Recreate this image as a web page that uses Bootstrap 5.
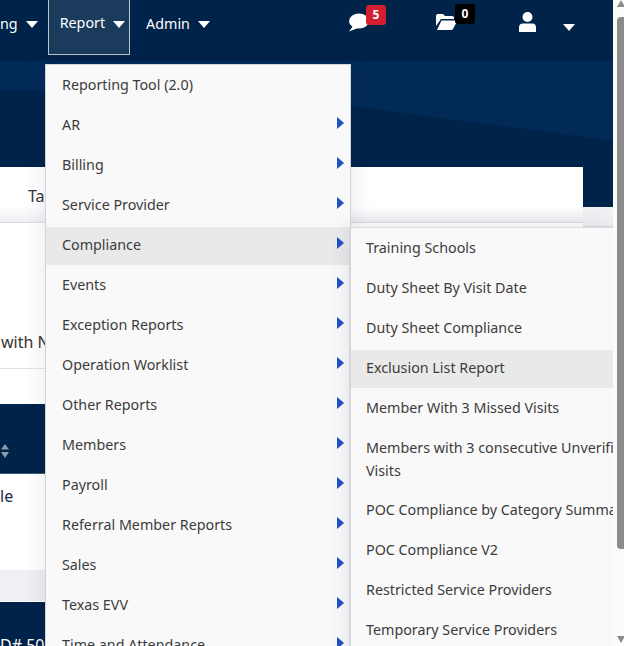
<!DOCTYPE html>
<html lang="en">
<head>
  <meta charset="UTF-8">
  <meta name="viewport" content="width=device-width, initial-scale=1">
  <title>Report menu</title>
  <link href="https://cdn.jsdelivr.net/npm/bootstrap@5.3.0/dist/css/bootstrap.min.css" rel="stylesheet">
  <style>
    html, body { height: 646px; overflow: hidden; }
    body { position: relative; font-family: "Noto Sans", "Open Sans", sans-serif; font-size: 14.3px; background: #fff; color: #333; }

    /* scrollbar of the window */
    .win-bar { position: absolute; top: 0; right: 0; bottom: 0; width: 11px; background: #fbfbfb; z-index: 5; }
    .win-thumb { position: absolute; left: 4px; right: 0; top: 17px; height: 532px; background: #8b8b8b; border-radius: 4px 0 0 4px; }
    .win-up, .win-down { position: absolute; left: 4px; width: 0; height: 0; border-left: 4px solid transparent; border-right: 4px solid transparent; }
    .win-up { top: 0; border-bottom: 7px solid #8b8b8b; }
    .win-down { bottom: 3px; border-top: 7px solid #8b8b8b; }

    .top-bar { height: 61px; background: #00234a; }
    .top-item { color: #fff; height: 55px; display: flex; align-items: center; gap: 8px; padding: 0 10px 8px 11px; }
    .top-first { margin-left: -11px; }
    .top-item-on { background: #1b3b5c; border: 1px solid #b9c4cf; border-top: 0; padding-right: 4px; }
    .top-after { margin-left: 5px; }
    .caret-down { width: 0; height: 0; border-left: 6.5px solid transparent; border-right: 6.5px solid transparent; border-top: 7px solid #fff; margin-top: 2px; }
    .caret-user { position: absolute; left: 563px; top: 22px; }
    .top-icon { position: absolute; }
    .icon-chat { left: 348px; top: 13px; }
    .icon-folder { left: 436px; top: 14px; }
    .icon-user { left: 519px; top: 12px; }
    .count-tag { position: absolute; width: 20px; height: 20px; border-radius: 3px; color: #fff; font-size: 12px; font-weight: 700; display: flex; align-items: center; justify-content: center; }
    .tag-chat { left: 366px; top: 5px; background: #d2202f; }
    .tag-folder { left: 455px; top: 4px; background: #000; }

    .hero { height: 146px; background: #00234a; position: relative; overflow: hidden; }
    .hero svg { display: block; }

    .back-text { font-size: 16px; }
    .tab-card { position: absolute; top: 167px; left: 0; width: 583px; height: 56px; background: linear-gradient(#fff 70%, #f0eff3); border-bottom: 1px solid #dcdce0; padding: 17px 0 0 28px; color: #333; }
    .strip-grey { position: absolute; top: 207px; left: 583px; right: 10px; height: 20px; background: #f1f0f3; border-bottom: 1px solid #d8d8dc; }
    .side-text { position: absolute; left: 1px; top: 330px; color: #333; white-space: nowrap; }
    .rule-line { position: absolute; left: 0; top: 368px; width: 46px; border-top: 1px solid #e2e2e6; }
    .head-band { position: absolute; left: 0; top: 404px; width: 46px; height: 70px; background: #00234a; border-bottom: 1px solid #3c5878; }
    .sort-mark { position: absolute; left: 0; top: 444px; }
    .row-text { position: absolute; left: 0; top: 484px; color: #1c2b45; }
    .grey-band { position: absolute; left: 0; top: 570px; width: 46px; height: 31px; background: #f0eff3; }
    .foot-band { position: absolute; left: 0; top: 602px; width: 46px; height: 44px; background: #00234a; color: #fff; padding-top: 31px; white-space: nowrap; overflow: hidden; }

    .fly-menu { position: absolute; background: #f9f9f9; margin: 0; padding: 2px 0 0; list-style: none; z-index: 3; color: #3c3c3c; box-shadow: 0 0 20px rgba(50, 40, 90, .12); }
    .fly-main { left: 45px; top: 64px; width: 306px; height: 600px; border: 1px solid #d4d4d8; border-bottom: 0; }
    .fly-sub { left: 349px; top: 227px; width: 264px; height: 440px; border-left: 2px solid #d6d6dc; border-top: 1px solid #dcdce0; overflow: hidden; }
    .fly-item { display: block; position: relative; padding: 8px 16px 10px; margin-bottom: 2px; line-height: 20px; white-space: nowrap; }
    .fly-sub .fly-item { padding-left: 15px; }
    .fly-sub .fly-item.wraps { line-height: 23px; padding-top: 6px; padding-bottom: 8px; }
    .fly-item-on { background: #e9e9e9; }
    .go-arrow { position: absolute; right: 6px; top: 10px; width: 0; height: 0; border-top: 6.5px solid transparent; border-bottom: 6.5px solid transparent; border-left: 7px solid #1f51c4; }
  </style>
</head>
<body>
  <div class="top-bar d-flex align-items-start position-relative">
    <div class="top-item top-first"><span>ng</span><span class="caret-down"></span></div>
    <div class="top-item top-item-on"><span>Report</span><span class="caret-down"></span></div>
    <div class="top-item top-after"><span>Admin</span><span class="caret-down"></span></div>

    <svg class="top-icon icon-chat" width="22" height="19" viewBox="0 0 22 19"><ellipse cx="11" cy="8" rx="10" ry="7.5" fill="#fff"/><path d="M5 13 L1 18.5 L10 15 Z" fill="#fff"/></svg>
    <span class="count-tag tag-chat">5</span>

    <svg class="top-icon icon-folder" width="22" height="16" viewBox="0 0 22 16"><path d="M0 2 Q0 0 2 0 H7 L9 2 H16 Q18 2 18 4 V5 H5 L0 12 Z" fill="#fff"/><path d="M5.500 6.500 H21.500 L17 15 Q16.500 16 15 16 H1 Z" fill="#fff"/></svg>
    <span class="count-tag tag-folder">0</span>

    <svg class="top-icon icon-user" width="17" height="20" viewBox="0 0 17 20"><circle cx="8.500" cy="5" r="5" fill="#fff"/><path d="M0 20 V15.500 Q0 11.500 4 11.500 H13 Q17 11.500 17 15.500 V20 Z" fill="#fff"/></svg>
    <span class="caret-down caret-user"></span>
  </div>

  <div class="hero">
    <svg width="624" height="146" viewBox="0 0 624 146"><path d="M0 0 H624 V81 L350 45 Q180 24 0 30 Z" fill="#022a57"/></svg>
  </div>

  <div class="tab-card back-text">Tab</div>
  <div class="strip-grey"></div>
  <div class="side-text back-text">with N</div>
  <div class="rule-line"></div>
  <div class="head-band"></div>
  <svg class="sort-mark" width="10" height="14" viewBox="0 0 10 14"><path d="M5 0 L9 5.500 H1 Z M5 14 L9 8 H1 Z" fill="#8d99a9"/></svg>
  <div class="row-text back-text">le</div>
  <div class="grey-band"></div>
  <div class="foot-band back-text">D# 501</div>

  <ul class="fly-menu fly-main">
    <li class="fly-item">Reporting Tool (2.0)</li>
    <li class="fly-item">AR<span class="go-arrow"></span></li>
    <li class="fly-item">Billing<span class="go-arrow"></span></li>
    <li class="fly-item">Service Provider<span class="go-arrow"></span></li>
    <li class="fly-item fly-item-on">Compliance<span class="go-arrow"></span></li>
    <li class="fly-item">Events<span class="go-arrow"></span></li>
    <li class="fly-item">Exception Reports<span class="go-arrow"></span></li>
    <li class="fly-item">Operation Worklist<span class="go-arrow"></span></li>
    <li class="fly-item">Other Reports<span class="go-arrow"></span></li>
    <li class="fly-item">Members<span class="go-arrow"></span></li>
    <li class="fly-item">Payroll<span class="go-arrow"></span></li>
    <li class="fly-item">Referral Member Reports<span class="go-arrow"></span></li>
    <li class="fly-item">Sales<span class="go-arrow"></span></li>
    <li class="fly-item">Texas EVV<span class="go-arrow"></span></li>
    <li class="fly-item">Time and Attendance<span class="go-arrow"></span></li>
  </ul>

  <ul class="fly-menu fly-sub">
    <li class="fly-item">Training Schools</li>
    <li class="fly-item">Duty Sheet By Visit Date</li>
    <li class="fly-item">Duty Sheet Compliance</li>
    <li class="fly-item fly-item-on">Exclusion List Report</li>
    <li class="fly-item">Member With 3 Missed Visits</li>
    <li class="fly-item wraps">Members with 3 consecutive Unverified<br>Visits</li>
    <li class="fly-item">POC Compliance by Category Summary</li>
    <li class="fly-item">POC Compliance V2</li>
    <li class="fly-item">Restricted Service Providers</li>
    <li class="fly-item">Temporary Service Providers</li>
  </ul>

  <div class="win-bar"><span class="win-up"></span><div class="win-thumb"></div><span class="win-down"></span></div>

  <script src="https://cdn.jsdelivr.net/npm/bootstrap@5.3.0/dist/js/bootstrap.bundle.min.js"></script>
</body>
</html>
